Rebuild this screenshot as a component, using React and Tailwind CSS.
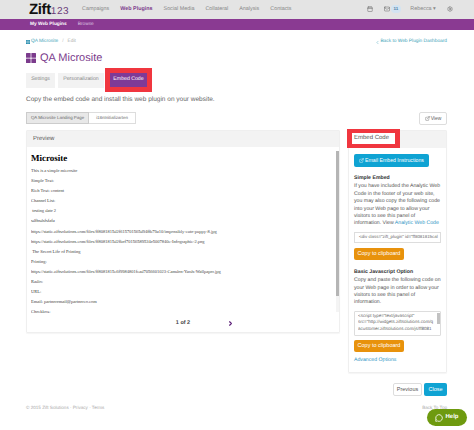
import { ExternalLink, Mail, MessageCircle, Settings, ChevronLeft, ChevronRight, Calendar } from "lucide-react";

const NAV = ["Campaigns", "Web Plugins", "Social Media", "Collateral", "Analysis", "Contacts"];

const PREVIEW_LINES = [
  "This is a simple microsite",
  "Simple Text:",
  "Rich Text: content",
  "Channel List:",
  "\u00a0testing date 2",
  "sdfhsdsfsfafa",
  "https://static.ziftsolutions.com/files/ff8081815d2f615701565d94ffb79a10/impossibly-cute-puppy-8.jpg",
  "https://static.ziftsolutions.com/files/ff8081815d2fbef70156589534e5007840c-Infographic-2.png",
  "\u00a0The Secret Life of Printing",
  "Printing:",
  "https://static.ziftsolutions.com/files/ff8081815c6f9984801fcad7056601023-Camden-Yards-Wallpaper.jpg",
  "Radio:",
  "URL:",
  "Email: partneremail@partnerco.com",
  "Checkbox:",
];

function GridIcon({ className }) {
  return (
    <svg viewBox="0 0 16 16" className={className} fill="currentColor">
      <rect x="0" y="0" width="7.4" height="7.4" rx="0.8" />
      <rect x="8.6" y="0" width="7.4" height="7.4" rx="0.8" />
      <rect x="0" y="8.6" width="7.4" height="7.4" rx="0.8" />
      <rect x="8.6" y="8.6" width="7.4" height="7.4" rx="0.8" />
    </svg>
  );
}

function CopyButton() {
  return (
    <button className="block h-[12px] w-[50px] rounded-[2px] bg-[#e8920c] text-[5.5px] leading-none text-white">
      Copy to clipboard
    </button>
  );
}

export default function App() {
  return (
    <div className="relative h-[430px] w-[474px] overflow-hidden bg-white font-['Liberation_Sans',Arial,sans-serif] text-[#555] [text-rendering:geometricPrecision]">
      {/* Top nav */}
      <div className="flex h-[19px] items-center bg-[#e4e4e4] pl-[29px]">
        <div className="flex w-[53px] items-baseline">
          <span className="text-[15px] leading-none font-bold tracking-[-0.4px] text-[#111]">Zift</span>
          <span className="text-[10px] leading-none tracking-[0.6px] text-[#6b3b78]">123</span>
        </div>
        <div className="flex gap-[11px] text-[5.4px] text-[#888]">
          {NAV.map((item) => (
            <span key={item} className={item === "Web Plugins" ? "font-bold text-[#7d3c8c]" : ""}>
              {item}
            </span>
          ))}
        </div>
        <div className="ml-[75px] flex items-center text-[#666]">
          <Calendar size={6} />
          <Mail size={6} className="ml-[11px]" />
          <span className="ml-[1px] rounded-full bg-[#d3e4f2] px-[3px] text-[4.5px] leading-[8px] font-bold text-[#5b86ab]">11</span>
          <span className="ml-[9px] text-[5.4px] text-[#888]">Rebecca ▾</span>
          <Settings size={6} className="ml-[11px]" />
        </div>
      </div>
      <div className="flex h-[11px] items-center gap-[11px] bg-[#8a3a92] pl-[30px] text-[4.8px]">
        <span className="font-bold text-white">My Web Plugins</span>
        <span className="text-[#dcc3e0]">Browse</span>
      </div>

      {/* Page */}
      <div className="w-[447px] pl-[26px]">
        <div className="flex h-[15px] items-end justify-between text-[4.8px] leading-[6px]">
          <div className="flex items-center gap-[1px] text-[#3da3b8]">
            <GridIcon className="h-[4px] w-[4px] text-[#2b8fb0]" />
            <span>QA Microsite</span>
            <span className="ml-[3px] text-[#bbb]">/</span>
            <span className="ml-[3px] text-[#aaa]">Edit</span>
          </div>
          <div className="flex items-center text-[#3da3b8]">
            <ChevronLeft size={5} />
            <span>Back to Web Plugin Dashboard</span>
          </div>
        </div>

        <div className="mt-[6px] flex h-[14px] items-center gap-[4px] text-[#7b3b8c]">
          <GridIcon className="h-[10px] w-[10px]" />
          <span className="text-[11px] leading-none">QA Microsite</span>
        </div>

        {/* Tabs */}
        <div className="mt-[3px] flex h-[24px] items-center text-[5.2px]">
          <span className="flex h-[15px] w-[29px] items-center justify-center bg-[#f2f2f2] text-[#888]">Settings</span>
          <span className="ml-[3px] flex h-[15px] w-[46px] items-center justify-center bg-[#f2f2f2] text-[#888]">Personalization</span>
          <span className="ml-[1px] flex h-[24px] w-[47px] items-center justify-center border-[5px] border-[#f0363f] bg-[#7e3a97] text-white">Embed Code</span>
        </div>

        <p className="mt-[4px] text-[6.5px] leading-[8px] text-[#666]">Copy the embed code and install this web plugin on your website.</p>

        <div className="mt-[8px] flex items-start justify-between">
          <div className="flex h-[12px] text-[4.4px] text-[#666]">
            <span className="flex w-[63px] items-center justify-center border border-[#ccc] bg-[#e8e8e8]">QA Microsite Landing Page</span>
            <span className="flex w-[47px] items-center justify-center border border-l-0 border-[#ddd] bg-white">i18nInitializarten</span>
          </div>
          <button className="flex h-[13px] w-[28px] items-center justify-center gap-[1px] rounded-[2px] border border-[#ddd] text-[5px] text-[#666]">
            <ExternalLink size={5} />
            View
          </button>
        </div>

        <div className="mt-[5px] flex items-start justify-between">
          {/* Preview panel */}
          <div className="h-[203px] w-[314px] rounded-[1px] border border-[#efefef] shadow-[0_1px_1px_rgba(0,0,0,0.04)]">
            <div className="flex h-[16px] items-center bg-[#f3f3f3] pl-[6px] text-[6px] text-[#555]">Preview</div>
            <div className="flex h-[166px] pl-[4px]">
              <div className="w-[303px] overflow-hidden font-['Liberation_Serif',serif] text-black">
                <div className="pt-[6px] text-[9px] leading-[11px] font-bold">Microsite</div>
                <div className="mt-[4px] flex flex-col gap-[3.2px] text-[4.5px] leading-[6.9px] text-[#444]">
                  {PREVIEW_LINES.map((line) => (
                    <div key={line} className="whitespace-nowrap">{line}</div>
                  ))}
                </div>
              </div>
              <div className="mt-[4px] ml-[2px] h-[161px] w-[3px] bg-[#f4f4f4]">
                <div className="h-[145px] w-[3px] bg-[#b5b5b5]"></div>
              </div>
            </div>
            <div className="relative flex h-[19px] items-center justify-center pt-[2px] text-[5.5px] font-bold text-[#444]">
              <span>1 of 2</span>
              <ChevronRight size={7} strokeWidth={4} className="absolute left-[200px] text-[#5c1f78]" />
            </div>
          </div>

          {/* Embed panel */}
          <div className="relative h-[243px] w-[99px] rounded-[1px] border border-[#efefef] shadow-[0_1px_1px_rgba(0,0,0,0.04)]">
            <div className="h-[17px] bg-[#f3f3f3]"></div>
            <div className="absolute top-[-2px] left-[-2px] flex h-[19px] w-[53px] items-center border-x-[5px] border-y-[4px] border-[#f0363f] bg-white pl-[2px] text-[6px] whitespace-nowrap text-[#555]">
              Embed Code
            </div>
            <div className="pt-[6px] pr-[5px] pl-[5px]">
              <button className="flex h-[13px] w-[75px] items-center justify-center gap-[1px] rounded-[2px] bg-[#0fa3d3] text-[5.2px] text-white">
                <ExternalLink size={5} />
                Email Embed Instructions
              </button>
              <div className="mt-[8px] text-[5.2px] leading-[7.4px] font-bold text-[#333]">Simple Embed</div>
              <p className="mt-[1px] text-[5.2px] leading-[7.4px] text-[#555]">
                If you have included the Analytic Web Code in the footer of your web site, you may also copy the following code into your Web page to allow your visitors to see this panel of information. View <span className="text-[#2f96c4]">Analytic Web Code</span>
              </p>
              <div className="mt-[4px] flex h-[11px] items-center border border-[#ddd] pl-[4px] text-[4.4px] whitespace-nowrap text-[#666]">
                &lt;div class="zift_plugin" id="ff8081815cal
              </div>
              <div className="mt-[5px]"><CopyButton /></div>
              <div className="mt-[9px] text-[5.2px] leading-[7.4px] font-bold text-[#333]">Basic Javascript Option</div>
              <p className="mt-[1px] text-[5.2px] leading-[7.4px] text-[#555]">
                Copy and paste the following code on your Web page in order to allow your visitors to see this panel of information.
              </p>
              <div className="mt-[4px] flex h-[25px] overflow-hidden rounded-[1px] border border-[#ddd] pl-[3px] text-[4.5px] leading-[6.5px] text-[#666]">
                <div className="w-[79px] overflow-hidden pt-[1px] whitespace-nowrap">
                  &lt;script type="text/javascript"<br />
                  src="http://widgets.ziftsolutions.com/q<br />
                  acustomer.ziftsolutions.com/js/ff8081
                </div>
                <div className="mt-[1px] h-[11px] w-[3px] bg-[#c2c2c2]"></div>
              </div>
              <div className="mt-[4px]"><CopyButton /></div>
              <div className="mt-[5px] text-[5.2px] leading-[7px] text-[#2f96c4]">Advanced Options</div>
            </div>
          </div>
        </div>

        <div className="mt-[10px] flex justify-end gap-[2px] text-[5.5px]">
          <button className="h-[13px] w-[29px] rounded-[2px] border border-[#ddd] text-[#555]">Previous</button>
          <button className="h-[13px] w-[23px] rounded-[2px] bg-[#0fa3d3] text-white">Close</button>
        </div>

        <div className="mt-[9px] flex items-center justify-between text-[4.6px] leading-[6px] text-[#aaa]">
          <span>© 2015 Zift Solutions · Privacy · Terms</span>
          <span>Back To Top</span>
        </div>
      </div>

      <div className="absolute top-[409px] left-[427px] flex h-[17px] w-[40px] items-center justify-center gap-[2px] rounded-full bg-[#6e9a0f] text-[6px] font-bold text-white">
        <MessageCircle size={8} strokeWidth={2.5} />
        Help
      </div>
    </div>
  );
}
